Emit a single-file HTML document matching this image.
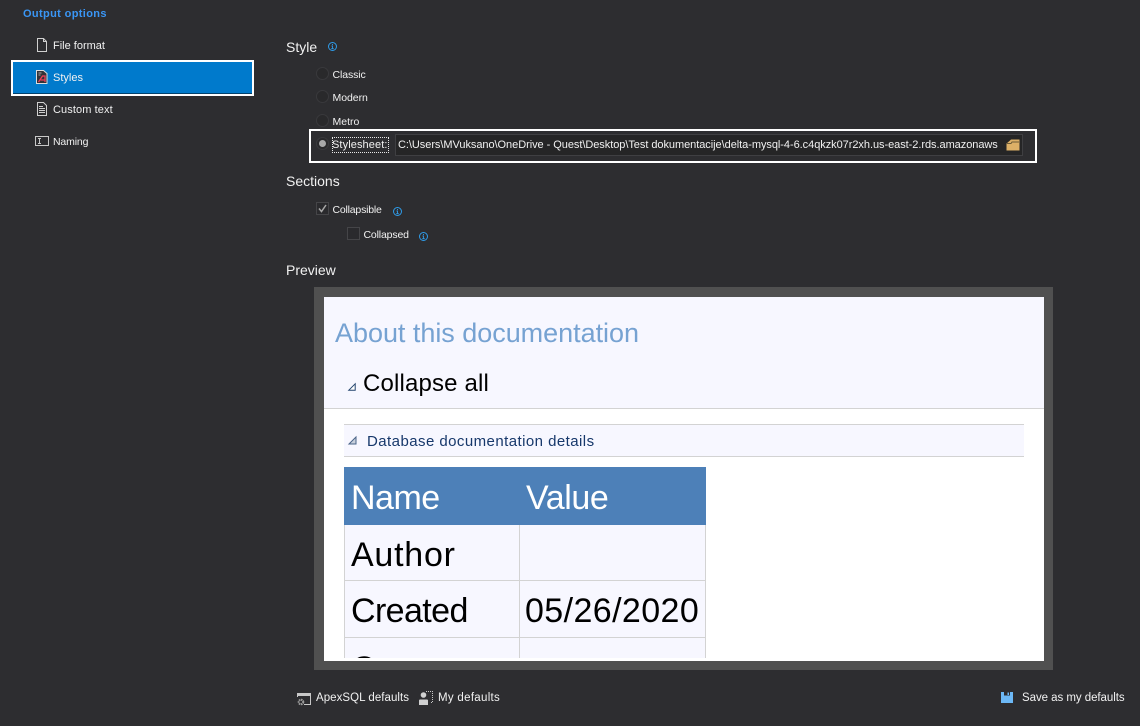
<!DOCTYPE html>
<html lang="en"><head><meta charset="utf-8"><title>Output options</title>
<style>
html,body{margin:0;padding:0;width:1140px;height:726px;overflow:hidden;background:#2d2d30}
body{position:relative;font-family:"Liberation Sans",sans-serif;color:#f1f1f1}
.a{position:absolute;white-space:nowrap}
.t{position:absolute;white-space:nowrap;font-size:11px;line-height:14px;color:#f1f1f1}
.h{position:absolute;white-space:nowrap;font-size:14px;line-height:18px;color:#f1f1f1}
.r{position:absolute;width:11px;height:11px;border-radius:50%;background:#29292b;border:1px solid #39393c}
.c{position:absolute;background:#2a2a2d;border:1px solid #454548;box-sizing:border-box}
svg{position:absolute;overflow:visible}
.p{position:absolute;white-space:nowrap;color:#000}
</style></head><body>

<div class="t" style="left:23px;top:7px;font-weight:bold;color:#3a96f5;letter-spacing:.36px">Output options</div>

<!-- nav -->
<div class="a" style="left:11px;top:60px;width:239px;height:32px;background:#007acc;border:2px solid #fff"></div>
<div class="a" style="left:13px;top:93px;width:239px;height:1px;background:#00406c"></div>

<svg style="left:36px;top:38px" width="12" height="14" viewBox="0 0 12 14"><path d="M1.500.5h6l3 3v10h-9z M7.500.5v3h3" fill="none" stroke="#d0d0d0"/></svg>
<div class="t" style="left:53px;top:38.500px">File format</div>

<svg style="left:36px;top:70px" width="12" height="14" viewBox="0 0 12 14"><path d="M.5.5h7l3.500 3v10H.5z" fill="#333338" stroke="#dcdcdc"/><path d="M2.500 12l4-6h2.500v6M4.500 10h4.500" fill="none" stroke="#ee3f58" stroke-width="1.300"/><path d="M2.500 3h3M2.500 5h2" stroke="#aaa"/></svg>
<div class="t" style="left:53px;top:70.500px">Styles</div>

<svg style="left:36px;top:102px" width="12" height="14" viewBox="0 0 12 14"><path d="M1.500.5h6l3 3v10h-9z" fill="none" stroke="#d0d0d0"/><path d="M3 4.500h4M3 6.500h6M3 8.500h6M3 10.500h6" stroke="#d0d0d0"/></svg>
<div class="t" style="left:53px;top:102.500px;letter-spacing:.1px">Custom text</div>

<svg style="left:35px;top:136px" width="14" height="10" viewBox="0 0 14 10"><rect x=".5" y=".5" width="13" height="9" fill="none" stroke="#c8c8c8"/><path d="M3 2.500h3M3 7.500h3M4.500 2.500v5" stroke="#c8c8c8"/></svg>
<div class="t" style="left:53px;top:134.500px;font-size:10.500px;letter-spacing:-.15px">Naming</div>

<!-- Style -->
<div class="h" style="left:286px;top:38px">Style</div>
<svg style="left:328px;top:42px" width="9" height="9" viewBox="0 0 9 9"><circle cx="4.500" cy="4.500" r="4" fill="none" stroke="#2f9be8"/><path d="M4.500 2v1M3.500 4h1v2.500M3.200 6.700h2.600" stroke="#2f9be8" stroke-width=".9" fill="none"/></svg>

<div class="r" style="left:316px;top:67px"></div>
<div class="t" style="left:332.500px;top:67.500px;font-size:10.500px;letter-spacing:-.1px">Classic</div>
<div class="r" style="left:316px;top:90px"></div>
<div class="t" style="left:332.500px;top:90.500px;font-size:10.500px;letter-spacing:-.05px">Modern</div>
<div class="r" style="left:316px;top:114px"></div>
<div class="t" style="left:332.500px;top:114.500px;font-size:10.500px">Metro</div>

<div class="a" style="left:309px;top:129px;width:724px;height:30px;border:2px solid #fff"></div>
<div class="r" style="left:316px;top:137px"></div>
<div class="a" style="left:319px;top:140px;width:7px;height:7px;border-radius:50%;background:#a8a8a8"></div>
<div class="a" style="left:332px;top:137px;width:55px;height:14px;border:1px dotted #e8e8e8"></div>
<div class="t" style="left:332px;top:137.500px;letter-spacing:.1px">Stylesheet:</div>
<div class="a" style="left:395px;top:134px;width:626px;height:20px;background:#252526;border:1px solid #3f3f42"></div>
<div class="t" style="left:398px;top:138px;letter-spacing:-.05px">C:\Users\MVuksano\OneDrive - Quest\Desktop\Test dokumentacije\delta-mysql-4-6.c4qkzk07r2xh.us-east-2.rds.amazonaws</div>
<svg style="left:1006px;top:139px" width="14" height="12" viewBox="0 0 14 12"><path d="M4 1.500L5 .5h8.500v11H.5V4.500L4 1.500z" fill="#dcb067"/><path d="M1 4.500h4l1-1.500h7" fill="none" stroke="#6b5a35"/></svg>

<!-- Sections -->
<div class="h" style="left:286px;top:172px">Sections</div>
<div class="c" style="left:316px;top:202px;width:13px;height:13px"></div>
<svg style="left:316px;top:202px" width="13" height="13" viewBox="0 0 13 13"><path d="M3 6.500l2.500 3L10 3" fill="none" stroke="#a8a8a8" stroke-width="1.500"/></svg>
<div class="t" style="left:332.500px;top:202.500px;font-size:10.500px;letter-spacing:-.2px">Collapsible</div>
<svg style="left:393px;top:207px" width="9" height="9" viewBox="0 0 9 9"><circle cx="4.500" cy="4.500" r="4" fill="none" stroke="#2f9be8"/><path d="M4.500 2v1M3.500 4h1v2.500M3.200 6.700h2.600" stroke="#2f9be8" stroke-width=".9" fill="none"/></svg>
<div class="c" style="left:347px;top:227px;width:13px;height:13px"></div>
<div class="t" style="left:363.500px;top:227.500px;font-size:10.500px;letter-spacing:-.15px">Collapsed</div>
<svg style="left:419px;top:232px" width="9" height="9" viewBox="0 0 9 9"><circle cx="4.500" cy="4.500" r="4" fill="none" stroke="#2f9be8"/><path d="M4.500 2v1M3.500 4h1v2.500M3.200 6.700h2.600" stroke="#2f9be8" stroke-width=".9" fill="none"/></svg>

<div class="h" style="left:286px;top:261px">Preview</div>

<!-- Preview -->
<div class="a" style="left:314px;top:287px;width:739px;height:383px;background:#505050"></div>
<div class="a" style="left:324px;top:297px;width:720px;height:364px;background:#fff;overflow:hidden">
  <div class="a" style="left:0;top:0;width:720px;height:111px;background:#f7f7ff;border-bottom:1px solid #d3d3d3"></div>
  <div class="p" style="left:11px;top:19px;font-size:27px;line-height:34px;color:#76a2d2;letter-spacing:-.03px">About this documentation</div>
  <svg style="left:24px;top:86px" width="8" height="8" viewBox="0 0 8 8"><path d="M.8 7.200h6.400V.8z" fill="#fff" stroke="#24456e"/></svg>
  <div class="p" style="left:39px;top:72px;font-size:24px;line-height:30px;letter-spacing:.16px">Collapse all</div>

  <div class="a" style="left:20px;top:127px;width:680px;height:31px;background:#f7f7ff;border-top:1px solid #d3d3d3;border-bottom:1px solid #d3d3d3"></div>
  <svg style="left:24px;top:139px" width="9" height="9" viewBox="0 0 9 9"><path d="M1 8h7V1z" fill="#c8d0dc" stroke="#4a6488"/></svg>
  <div class="p" style="left:43px;top:135px;font-size:15px;line-height:20px;color:#17386b;letter-spacing:.44px">Database documentation details</div>

  <div class="a" style="left:20px;top:170px;width:362px;height:191px;background:#f7f7ff;overflow:hidden">
    <div class="a" style="left:0;top:0;width:362px;height:58px;background:#4d80b8"></div>
    <div class="p" style="left:7px;top:10px;font-size:34px;line-height:42px;color:#fff;letter-spacing:-.5px">Name</div>
    <div class="p" style="left:182px;top:10px;font-size:34px;line-height:42px;color:#fff;letter-spacing:-.4px">Value</div>
    <div class="a" style="left:0;top:58px;width:1px;height:133px;background:#d3d3d3"></div>
    <div class="a" style="left:175px;top:58px;width:1px;height:133px;background:#d3d3d3"></div>
    <div class="a" style="left:361px;top:58px;width:1px;height:133px;background:#d3d3d3"></div>
    <div class="a" style="left:0;top:113px;width:362px;height:1px;background:#d3d3d3"></div>
    <div class="a" style="left:0;top:170px;width:362px;height:1px;background:#d3d3d3"></div>
    <div class="p" style="left:7px;top:67px;font-size:34px;line-height:42px;letter-spacing:.75px">Author</div>
    <div class="p" style="left:7px;top:123px;font-size:34px;line-height:42px;letter-spacing:-.6px">Created</div>
    <div class="p" style="left:181px;top:123px;font-size:34px;line-height:42px;letter-spacing:.4px">05/26/2020</div>
    <div class="p" style="left:7px;top:181px;font-size:34px;line-height:42px">C</div>
  </div>
</div>

<!-- Footer -->
<svg style="left:297px;top:692px" width="14" height="14" viewBox="0 0 14 14"><path d="M7 12.500h6.500v-11H.5V5" fill="none" stroke="#c8c8c8"/><path d="M1 3h12" stroke="#c8c8c8" stroke-width="2"/><circle cx="4" cy="10" r="2.300" fill="none" stroke="#9c9c9c" stroke-width="2" stroke-dasharray="1.500 .6"/></svg>
<div class="t" style="left:316px;top:691px;font-size:11.500px;letter-spacing:.05px">ApexSQL defaults</div>
<svg style="left:419px;top:691px" width="14" height="14" viewBox="0 0 14 14"><path d="M7 .5h6.500v11H11" fill="none" stroke="#c8c8c8" stroke-dasharray="1 1"/><circle cx="4.500" cy="4" r="2.800" fill="#d0d0d0"/><path d="M0 14V9.500q0-1 1-1h7q1 0 1 1V14z" fill="#d0d0d0"/></svg>
<div class="t" style="left:438px;top:691px;font-size:11.500px;letter-spacing:.3px">My defaults</div>
<svg style="left:1001px;top:692px" width="12" height="11" viewBox="0 0 12 11"><path d="M0 0h12v11H0z" fill="#6cb8f6"/><path d="M3 0h6v3.500H3z" fill="#2d2d30"/><path d="M6.500 .5h1.500v2.500H6.500z" fill="#6cb8f6"/></svg>
<div class="t" style="left:1022px;top:691px;font-size:11.500px;letter-spacing:-.05px">Save as my defaults</div>

</body></html>
